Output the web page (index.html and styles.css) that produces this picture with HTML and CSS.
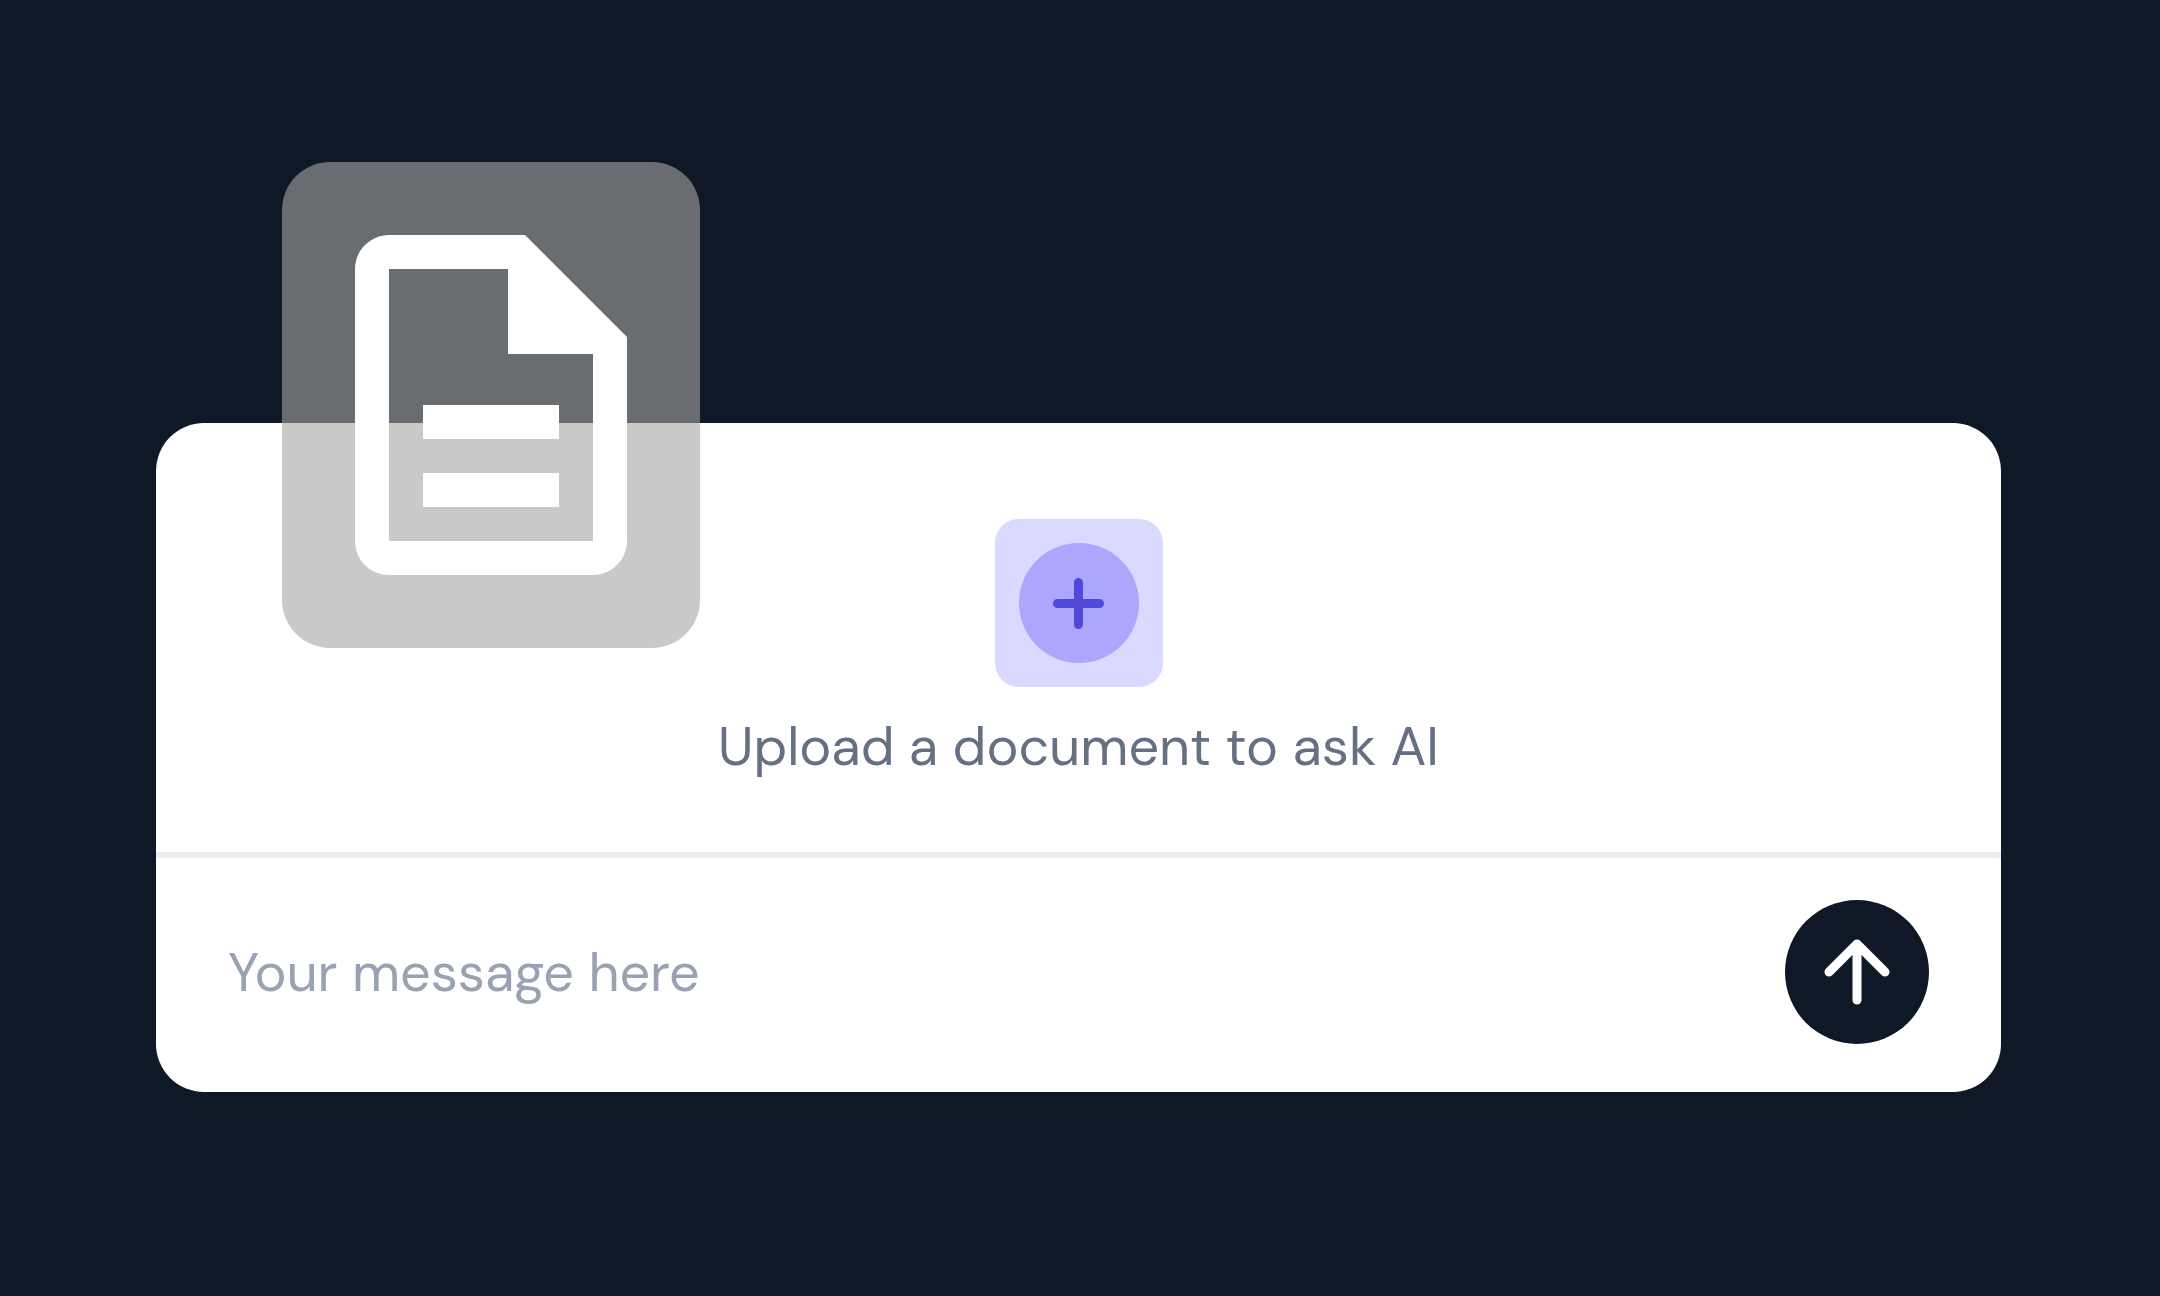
FILE: index.html
```html
<!DOCTYPE html>
<html lang="en">
<head>
  <meta charset="UTF-8" />
  <meta name="viewport" content="width=device-width, initial-scale=1.0" />
  <title>Ask AI</title>
  <link rel="stylesheet" href="styles.css">
</head>
<body>
  <main class="page">
    <form class="chat-card">
      <section class="upload">
        <button type="button" class="upload-btn" aria-labelledby="upload-text">
          <span class="upload-circle">
            <svg class="plus-icon" viewBox="0 0 51 51" aria-hidden="true">
              <path d="M25.5 4.5v42M4.5 25.5h42"/>
            </svg>
          </span>
        </button>
        <p class="upload-text" id="upload-text">Upload a document to ask AI</p>
      </section>

      <div class="message-bar">
        <input type="text" class="message-input" placeholder="Your message here" aria-label="Your message here" />
        <button type="submit" class="send-btn" aria-label="Send">
          <svg class="send-icon" viewBox="0 0 66 66" aria-hidden="true">
            <path d="M33 61V5M5 33L33 5l28 28"/>
          </svg>
        </button>
      </div>

      <!-- file being dragged over the card -->
      <div class="dragged-file">
        <svg class="file-icon" viewBox="4 2 16 20" aria-hidden="true">
          <path d="M8 16h8v2H8zm0-4h8v2H8zm6-10H6c-1.1 0-2 .9-2 2v16c0 1.1.89 2 1.99 2H18c1.1 0 2-.9 2-2V8l-6-6zm4 18H6V4h7v5h5v11z"/>
        </svg>
      </div>
    </form>
  </main>
</body>
</html>
```
FILE: styles.css
```css
* {
  box-sizing: border-box;
}
body {
  margin: 0;
  background: #0f1826;
  font-family: 'DM Sans', 'Open Sans', sans-serif;
  font-size: 54px;
  font-weight: 400;
  line-height: 72px;
}
button {
  display: flex;
  justify-content: center;
  align-items: center;
  flex-shrink: 0;
  padding: 0;
  border: none;
  cursor: pointer;
}
.page {
  min-height: 100vh;
  padding: 423px 159px 204px 156px;
}
.chat-card {
  position: relative;
  background: #fff;
  border-radius: 48px;
}
.upload {
  display: flex;
  flex-direction: column;
  align-items: center;
  gap: 24px;
  padding: 96px 72px 69px;
}
.upload-btn {
  width: 168px;
  height: 168px;
  border-radius: 24px;
  background: #dad9ff;
}
.upload-circle {
  display: flex;
  justify-content: center;
  align-items: center;
  width: 120px;
  height: 120px;
  border-radius: 50%;
  background: #aca6fd;
}
.plus-icon {
  width: 51px;
  height: 51px;
  fill: none;
  stroke: #5048d8;
  stroke-width: 9;
  stroke-linecap: round;
}
.upload-text {
  margin: 0;
  color: #667085;
}
.message-bar {
  display: flex;
  align-items: center;
  gap: 48px;
  padding: 42px 72px 48px;
  border-top: 6px solid #eaecf0;
}
.message-input {
  flex: 1;
  min-width: 0;
  padding: 2px 0 0;
  border: none;
  outline: none;
  background: transparent;
  color: #0f1826;
  font: inherit;
}
.message-input::placeholder {
  color: #98a2b3;
  opacity: 1;
}
.send-btn {
  width: 144px;
  height: 144px;
  border-radius: 50%;
  background: #0f1826;
}
.send-icon {
  width: 66px;
  height: 66px;
  fill: none;
  stroke: #fff;
  stroke-width: 9;
  stroke-linecap: round;
  stroke-linejoin: round;
}
.dragged-file {
  position: absolute;
  top: -261px;
  left: 126px;
  display: flex;
  padding: 73px;
  border-radius: 48px;
  background: rgba(165, 166, 164, 0.6);
  pointer-events: none;
}
.file-icon {
  width: 272px;
  height: 340px;
  fill: #fff;
}
```
